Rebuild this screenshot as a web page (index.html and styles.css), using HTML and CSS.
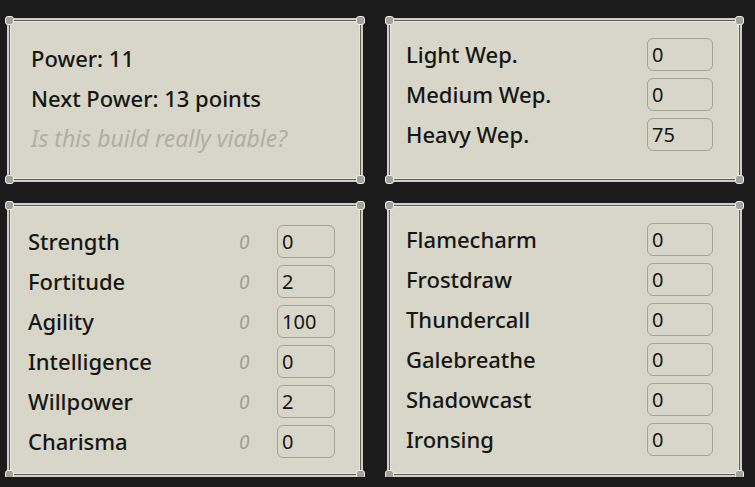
FILE: index.html
```html
<!DOCTYPE html>
<html lang="en">
<head>
    <meta charset="UTF-8">
    <meta name="viewport" content="width=device-width, initial-scale=1.0">
    <title>Build</title>
    <link rel="stylesheet" href="styles.css">
</head>
<body>
    <main class="grid">
        <section class="panel summary">
            <p class="line"><span class="key">Power:</span> 11</p>
            <p class="line"><span class="key">Next Power:</span> 13 points</p>
            <p class="line hint">Is this build really viable?</p>
            <i class="corner tl"></i><i class="corner tr"></i><i class="corner bl"></i><i class="corner br"></i>
        </section>

        <section class="panel weapons">
            <div class="row"><span class="label">Light Wep.</span><input class="field" type="text" value="0"></div>
            <div class="row"><span class="label">Medium Wep.</span><input class="field" type="text" value="0"></div>
            <div class="row"><span class="label">Heavy Wep.</span><input class="field" type="text" value="75"></div>
            <i class="corner tl"></i><i class="corner tr"></i><i class="corner bl"></i><i class="corner br"></i>
        </section>

        <section class="panel stats">
            <div class="row"><span class="label">Strength</span><span class="base">0</span><input class="field small" type="text" value="0"></div>
            <div class="row"><span class="label">Fortitude</span><span class="base">0</span><input class="field small" type="text" value="2"></div>
            <div class="row"><span class="label">Agility</span><span class="base">0</span><input class="field small" type="text" value="100"></div>
            <div class="row"><span class="label">Intelligence</span><span class="base">0</span><input class="field small" type="text" value="0"></div>
            <div class="row"><span class="label">Willpower</span><span class="base">0</span><input class="field small" type="text" value="2"></div>
            <div class="row"><span class="label">Charisma</span><span class="base">0</span><input class="field small" type="text" value="0"></div>
            <i class="corner tl"></i><i class="corner tr"></i><i class="corner bl"></i><i class="corner br"></i>
        </section>

        <section class="panel attunements">
            <div class="row"><span class="label">Flamecharm</span><input class="field" type="text" value="0"></div>
            <div class="row"><span class="label">Frostdraw</span><input class="field" type="text" value="0"></div>
            <div class="row"><span class="label">Thundercall</span><input class="field" type="text" value="0"></div>
            <div class="row"><span class="label">Galebreathe</span><input class="field" type="text" value="0"></div>
            <div class="row"><span class="label">Shadowcast</span><input class="field" type="text" value="0"></div>
            <div class="row"><span class="label">Ironsing</span><input class="field" type="text" value="0"></div>
            <i class="corner tl"></i><i class="corner tr"></i><i class="corner bl"></i><i class="corner br"></i>
        </section>
    </main>
</body>
</html>
```

FILE: styles.css
```css
body{
    margin: 0;
    background: #1b1b1b;
    font-family: 'Noto Sans', 'Open Sans', sans-serif;
    color: #161614;
}
.grid{
    display: grid;
    grid-template-columns: 356px 355px;
    grid-template-rows: 164px 274px;
    column-gap: 24px;
    row-gap: 21px;
    padding: 18px 0 0 7px;
}
.panel{
    position: relative;
    background: #d7d6c8;
    border: 2px solid #cfcfc7;
    box-shadow: inset 0 0 0 1px #5f5f58, inset 0 0 0 2px #e6e6de;
    box-sizing: border-box;
}
.corner{
    position: absolute;
    width: 9px;
    height: 9px;
    border: 1px solid #efefea;
    background: #a3a39c;
    box-sizing: border-box;
    border-radius: 3px;
}
.corner.tl{ top: -4px; left: -4px; }
.corner.tr{ top: -4px; right: -4px; }
.corner.bl{ bottom: -4px; left: -4px; }
.corner.br{ bottom: -4px; right: -4px; }

.summary{
    padding: 18px 22px 0 22px;
}
.line{
    margin: 0;
    font-size: 22px;
    font-weight: 500;
    line-height: 40px;
}
.hint{
    font-size: 23px;
    font-style: italic;
    font-weight: 400;
    color: #b0afa3;
}

.weapons, .attunements{
    padding: 18px 27px 0 17px;
}
.stats{
    padding: 20px 26px 0 19px;
}
.row{
    display: flex;
    align-items: center;
    height: 33px;
    margin-bottom: 7px;
}
.label{
    flex: 1;
    font-size: 22px;
    font-weight: 500;
    margin-top: -2px;
}
.base{
    width: 38px;
    font-size: 19px;
    font-style: italic;
    color: #a09f94;
}
.field{
    width: 66px;
    height: 33px;
    box-sizing: border-box;
    border: 1px solid #a4a396;
    border-radius: 6px;
    background: transparent;
    font-family: 'Noto Sans', 'Open Sans', sans-serif;
    font-size: 20px;
    color: #161614;
    padding: 0 4px;
    outline: none;
}
.field.small{
    width: 58px;
}
```
